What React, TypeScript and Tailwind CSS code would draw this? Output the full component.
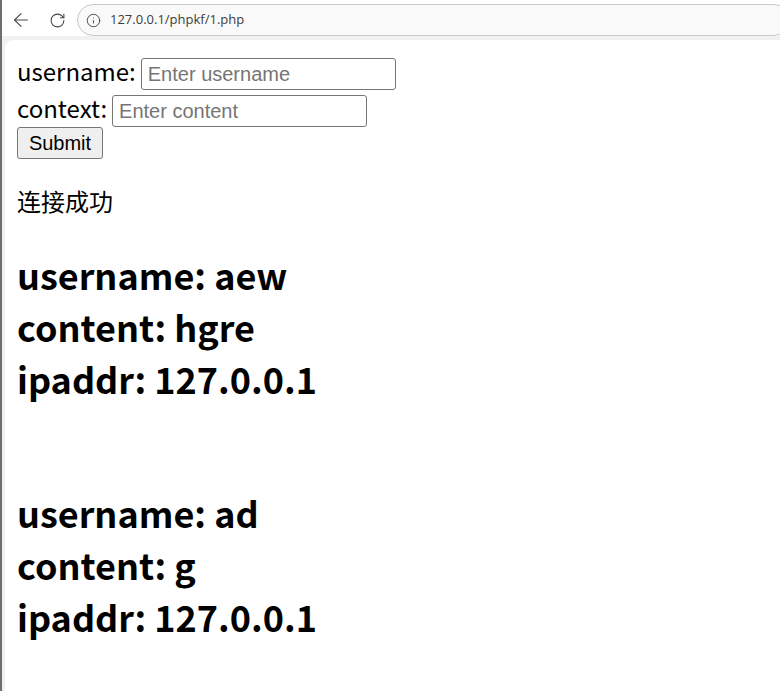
import { ArrowLeft, RotateCw, Info } from "lucide-react";

const cjk = "font-['Noto_Sans_CJK_SC','Noto_Sans',sans-serif]";

const records = [
  { username: "aew", content: "hgre", ipaddr: "127.0.0.1" },
  { username: "ad", content: "g", ipaddr: "127.0.0.1" },
];

const App = () => {
  return (
    <div className="h-[691px] w-[780px] overflow-hidden flex bg-white">
      <div className="w-[2px] bg-[#6e6e6e] shrink-0" />
      <div className="flex-grow flex flex-col min-w-0">
        <div className="h-[36px] pt-[4px] flex items-center shrink-0 text-[#474747]">
          <ArrowLeft className="w-[22px] h-[22px] ml-[8px]" strokeWidth={1.2} />
          <RotateCw className="w-[17px] h-[17px] ml-[17px]" strokeWidth={1.5} />
          <div className="ml-[11px] h-[32px] flex-grow -mr-[10px] flex items-center rounded-full border border-[#c8c8c8] bg-[#f9f9f9] pl-[8px]">
            <Info className="w-[15px] h-[15px]" strokeWidth={1.5} />
            <span className="ml-[9px] text-[13px] text-[#3c3c3c] font-['Open_Sans',sans-serif]">127.0.0.1/phpkf/1.php</span>
          </div>
        </div>
        <div className="flex-grow bg-[#f1f1f1] pt-[4px] pl-[3px]">
          <main className={`h-full bg-white rounded-tl-[8px] pl-[12px] pt-[18px] text-black ${cjk}`}>
            <form>
              <div className="h-[32px] flex items-center gap-[5px] text-[24px]">
                <label className="pb-[6px]">username:</label>
                <input
                  placeholder="Enter username"
                  className="w-[255px] h-[32px] px-[6px] border border-[#767676] rounded-[3px] text-[20px] font-['Liberation_Sans',sans-serif] placeholder:text-[#757575]"
                />
              </div>
              <div className="mt-[5px] h-[32px] flex items-center gap-[5px] text-[24px]">
                <label className="pb-[6px]">context:</label>
                <input
                  placeholder="Enter content"
                  className="w-[255px] h-[32px] px-[6px] border border-[#767676] rounded-[3px] text-[20px] font-['Liberation_Sans',sans-serif] placeholder:text-[#757575]"
                />
              </div>
              <button
                type="button"
                className="block w-[86px] h-[32px] border border-[#767676] rounded-[3px] bg-[#efefef] text-[20px] font-['Liberation_Sans',sans-serif]"
              >
                Submit
              </button>
            </form>
            <p className="mt-[24px] h-[36px] text-[24px] leading-[36px]">连接成功</p>
            <div className="mt-[29px]">
              {records.map((record, index) => (
                <div key={index} className="mb-[82px] text-[36px] leading-[52px] font-bold">
                  <div>username: {record.username}</div>
                  <div>content: {record.content}</div>
                  <div>ipaddr: {record.ipaddr}</div>
                </div>
              ))}
            </div>
          </main>
        </div>
      </div>
    </div>
  );
};

export default App;
